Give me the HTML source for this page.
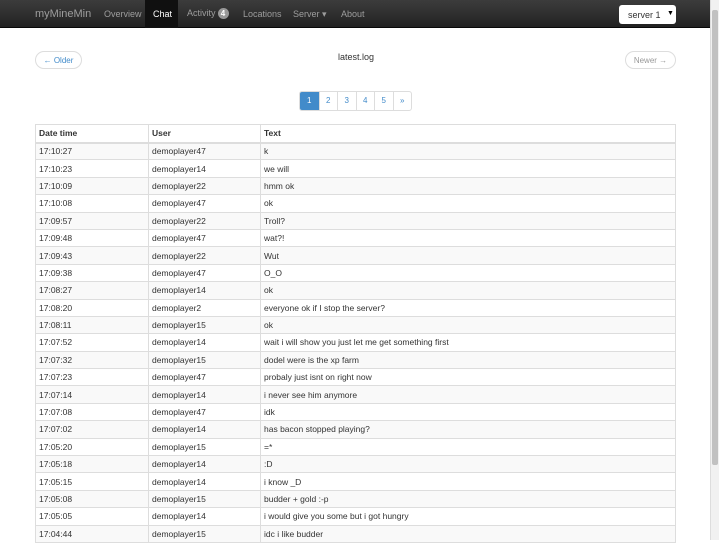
<!DOCTYPE html>
<html><head><style>
*{box-sizing:border-box;margin:0;padding:0}
body{width:719px;height:540px;overflow:hidden;font-family:"Liberation Sans",sans-serif;font-size:9px;color:#333;background:#fff;position:relative}
.nav{position:absolute;left:0;top:0;width:710px;height:28px;background:linear-gradient(#3c3c3c,#222);border-bottom:1px solid #080808}
.nav .it{position:absolute;top:9px;color:#9d9d9d;font-size:9px}
.brand{font-size:11px!important;top:8px!important;left:35px}
.active{position:absolute;left:145px;top:0;width:33px;height:28px;background:#101010}
.badge{display:inline-block;vertical-align:middle;background:#999;color:#fff;border-radius:6px;font-size:8px;font-weight:bold;width:11px;height:11px;text-align:center;line-height:11px;margin-left:2px}
.sel{position:absolute;left:619px;top:5px;width:57px;height:19px;background:#fff;border-radius:3px;font-size:9px;color:#333;padding:5px 0 0 9px}
.sb{position:absolute;right:0;top:0;width:9px;height:540px;background:#f1f1f1;border-left:1px solid #ddd}
.sb div{position:absolute;left:1px;top:10px;width:6px;height:455px;background:#c1c1c1;border-radius:2px}
.pill{position:absolute;top:51px;height:18px;border:1px solid #ddd;border-radius:10px;padding:4px 0;text-align:center;font-size:8px}
.pg{position:absolute;left:299px;top:91px;height:20px;display:flex;border:1px solid #ddd;border-radius:3px;overflow:hidden}
.pg div{width:18.5px;text-align:center;line-height:18px;color:#428bca;border-left:1px solid #ddd;font-size:8px}
.pg div:first-child{background:#428bca;color:#fff;border:none}
table{position:absolute;left:35px;top:124px;width:641px;border-collapse:collapse;border:1px solid #ddd}
td,th{border:1px solid #ddd;text-align:left;padding:0 3px;height:17.4px;font-size:8.5px;font-weight:normal}
th{font-weight:bold;height:18px;border-bottom:2px solid #ddd}
tr:nth-child(even) td{background:#f9f9f9}
</style></head><body>
<div class="nav">
<div class="active"></div>
<span class="it brand">myMineMin</span>
<span class="it" style="left:104px">Overview</span>
<span class="it" style="left:153px;color:#fff">Chat</span>
<span class="it" style="left:187px;top:8px">Activity<span class="badge">4</span></span>
<span class="it" style="left:243px">Locations</span>
<span class="it" style="left:293px">Server ▾</span>
<span class="it" style="left:341px">About</span>
<div class="sel">server 1 <span style="position:absolute;left:48px;top:5px;color:#000;font-size:7px">▼</span></div>
</div>
<div class="sb"><div></div></div>
<div class="pill" style="left:35px;width:47px;color:#428bca">← Older</div>
<div style="position:absolute;left:338px;top:52px;font-size:9px">latest.log</div>
<div class="pill" style="left:625px;width:51px;color:#999">Newer →</div>
<div class="pg"><div>1</div><div>2</div><div>3</div><div>4</div><div>5</div><div>»</div></div>
<table>
<tr><th style="width:113px">Date time</th><th style="width:112px">User</th><th>Text</th></tr>
<tr><td>17:10:27</td><td>demoplayer47</td><td>k</td></tr>
<tr><td>17:10:23</td><td>demoplayer14</td><td>we will</td></tr>
<tr><td>17:10:09</td><td>demoplayer22</td><td>hmm ok</td></tr>
<tr><td>17:10:08</td><td>demoplayer47</td><td>ok</td></tr>
<tr><td>17:09:57</td><td>demoplayer22</td><td>Troll?</td></tr>
<tr><td>17:09:48</td><td>demoplayer47</td><td>wat?!</td></tr>
<tr><td>17:09:43</td><td>demoplayer22</td><td>Wut</td></tr>
<tr><td>17:09:38</td><td>demoplayer47</td><td>O_O</td></tr>
<tr><td>17:08:27</td><td>demoplayer14</td><td>ok</td></tr>
<tr><td>17:08:20</td><td>demoplayer2</td><td>everyone ok if I stop the server?</td></tr>
<tr><td>17:08:11</td><td>demoplayer15</td><td>ok</td></tr>
<tr><td>17:07:52</td><td>demoplayer14</td><td>wait i will show you just let me get something first</td></tr>
<tr><td>17:07:32</td><td>demoplayer15</td><td>dodel were is the xp farm</td></tr>
<tr><td>17:07:23</td><td>demoplayer47</td><td>probaly just isnt on right now</td></tr>
<tr><td>17:07:14</td><td>demoplayer14</td><td>i never see him anymore</td></tr>
<tr><td>17:07:08</td><td>demoplayer47</td><td>idk</td></tr>
<tr><td>17:07:02</td><td>demoplayer14</td><td>has bacon stopped playing?</td></tr>
<tr><td>17:05:20</td><td>demoplayer15</td><td>=*</td></tr>
<tr><td>17:05:18</td><td>demoplayer14</td><td>:D</td></tr>
<tr><td>17:05:15</td><td>demoplayer14</td><td>i know _D</td></tr>
<tr><td>17:05:08</td><td>demoplayer15</td><td>budder + gold :-p</td></tr>
<tr><td>17:05:05</td><td>demoplayer14</td><td>i would give you some but i got hungry</td></tr>
<tr><td>17:04:44</td><td>demoplayer15</td><td>idc i like budder</td></tr>
</table>
</body></html>
